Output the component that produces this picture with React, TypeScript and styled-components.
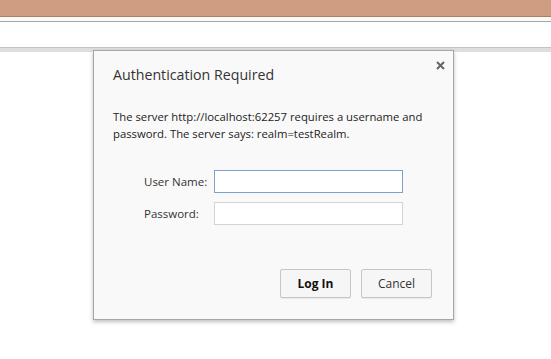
import React from 'react';
import styled, { createGlobalStyle } from 'styled-components';

const GlobalStyle = createGlobalStyle`
  html, body {
    margin: 0;
    padding: 0;
    background: #ffffff;
  }
  body {
    font-family: 'Open Sans', 'Noto Sans', sans-serif;
  }
`;

const Page = styled.div`
  position: relative;
  width: 551px;
  height: 359px;
  overflow: hidden;
  background: #ffffff;
`;

const TitleBar = styled.div`
  height: 16px;
  background: #cf9d82;
  border-bottom: 1px solid #a98068;
`;

const Toolbar = styled.div`
  height: 4px;
  background: #fcfbf6;
  border-bottom: 1px solid #9fa7b0;
`;

const AddressArea = styled.div`
  height: 25px;
  background: #ffffff;
`;

const InfoBand = styled.div`
  height: 4px;
  background: #dedede;
  border-top: 1px solid #c4c4c4;
`;

const Dialog = styled.div`
  position: absolute;
  top: 50px;
  left: 93px;
  width: 361px;
  height: 270px;
  background: #f9f9f9;
  border: 1px solid #a6a6a6;
  box-shadow: 0 2px 4px rgba(0, 0, 0, 0.25);
  display: flex;
  flex-direction: column;
  padding: 0 21px 0 19px;
  box-sizing: border-box;
  color: #222;
`;

const Header = styled.div`
  display: flex;
  justify-content: space-between;
  align-items: flex-start;
  padding-top: 14px;
`;

const Title = styled.h1`
  margin: 0;
  font-size: 14.2px;
  font-weight: 400;
  line-height: 20px;
  color: #333;
`;

const CloseButton = styled.button`
  border: none;
  background: none;
  padding: 0;
  margin: -7px -15px 0 0;
  width: 14px;
  height: 14px;
  display: flex;
  align-items: center;
  justify-content: center;
  cursor: pointer;
`;

const Message = styled.p`
  margin: 23px -12px 0 0;
  font-size: 11.3px;
  line-height: 17px;
  color: #222;
`;

const Form = styled.div`
  display: grid;
  grid-template-columns: 70px 189px;
  row-gap: 9px;
  margin: 28px 0 0 31px;
  align-items: center;
`;

const Label = styled.label`
  font-size: 11.5px;
  color: #333;
`;

const Input = styled.input<{ $focused?: boolean }>`
  height: 23px;
  box-sizing: border-box;
  border: 1px solid ${(p) => (p.$focused ? '#7da2ce' : '#d4d4d4')};
  background: #ffffff;
  outline: none;
  margin: 0;
  padding: 0 4px;
  font-size: 12px;
`;

const Footer = styled.div`
  display: flex;
  justify-content: flex-end;
  gap: 10px;
  margin-top: auto;
  padding-bottom: 21px;
`;

const Button = styled.button<{ $primary?: boolean }>`
  width: 71px;
  height: 29px;
  box-sizing: border-box;
  border: 1px solid #c6c6c6;
  border-radius: 2px;
  background: #f6f6f6;
  font-family: inherit;
  font-size: 12px;
  font-weight: ${(p) => (p.$primary ? 700 : 400)};
  color: ${(p) => (p.$primary ? '#111' : '#333')};
  box-shadow: 0 1px 0 rgba(0, 0, 0, 0.06);
  padding: 0;
`;

const CloseIcon = () => (
  <svg width='9' height='9' viewBox='0 0 9 9'>
    <path d='M1 1 L8 8 M8 1 L1 8' stroke='#666' strokeWidth='2' />
  </svg>
);

export default function App() {
  return (
    <Page>
      <GlobalStyle />
      <TitleBar />
      <Toolbar />
      <AddressArea />
      <InfoBand />
      <Dialog>
        <Header>
          <Title>Authentication Required</Title>
          <CloseButton aria-label='close'>
            <CloseIcon />
          </CloseButton>
        </Header>
        <Message>
          The server http://localhost:62257 requires a username and password. The server says:
          realm=testRealm.
        </Message>
        <Form>
          <Label>User Name:</Label>
          <Input $focused />
          <Label>Password:</Label>
          <Input type='password' />
        </Form>
        <Footer>
          <Button $primary>Log In</Button>
          <Button>Cancel</Button>
        </Footer>
      </Dialog>
    </Page>
  );
}
